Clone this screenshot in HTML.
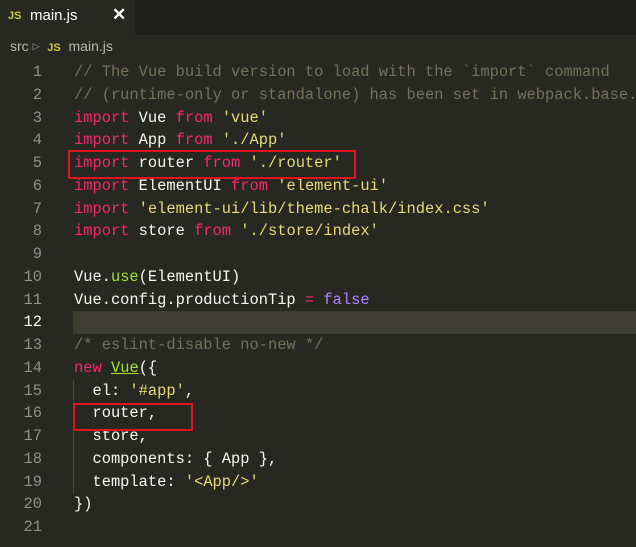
<!DOCTYPE html>
<html><head><meta charset="utf-8"><style>
body{margin:0;width:636px;height:547px;background:#272822;overflow:hidden;position:relative;font-family:"Liberation Mono",monospace;}
.tabbar{position:absolute;left:0;top:0;width:636px;height:35px;background:#1e1f1c;}
.tab{position:absolute;left:0;top:0;width:135px;height:35px;background:#272822;font-family:"Liberation Sans",sans-serif;}
.js{color:#cbcb41;font-weight:bold;font-size:11px;font-family:"Liberation Sans",sans-serif;}
.crumb{position:absolute;top:38px;left:10px;font-family:"Liberation Sans",sans-serif;font-size:14px;color:#b8b8b0;}
.ln{position:absolute;left:0;width:42px;text-align:right;color:#8f908a;font-size:15.4px;}
.code{position:absolute;left:74px;right:0;overflow:hidden;white-space:pre;color:#f8f8f2;font-size:15.4px;}
.k{color:#f92672}.s{color:#e6db74}.c{color:#75715e}.f{color:#a6e22e}.b{color:#ae81ff}
.box{position:absolute;border:2px solid #e0141e;box-sizing:border-box;}
</style></head><body>
<div class="tabbar"><div class="tab">
<span class="js" style="position:absolute;left:8px;top:10px">JS</span>
<span style="position:absolute;left:30px;top:7px;color:#fff;font-size:15px">main.js</span>
<span style="position:absolute;left:112px;top:5px;color:#fff;font-size:17px;font-weight:bold">✕</span>
</div></div>
<div class="crumb">src <span style="font-size:9px;color:#aaa;position:relative;top:-2px">▷</span>&nbsp; <span class="js" style="font-size:11px">JS</span>&nbsp; main.js</div>
<div style="position:absolute;left:73px;top:311px;width:563px;height:23px;background:#3e3d32"></div>
<div style="position:absolute;left:73px;top:380px;width:1px;height:114px;background:#464741"></div>
<div id="lines"></div>
<div class="box" style="left:68px;top:150px;width:288px;height:29px"></div>
<div class="box" style="left:73px;top:403px;width:120px;height:28px"></div>
<script>
var L=[
'<span class="c">// The Vue build version to load with the `import` command</span>',
'<span class="c">// (runtime-only or standalone) has been set in webpack.base.conf with an alias.</span>',
'<span class="k">import</span> Vue <span class="k">from</span> <span class="s">\'vue\'</span>',
'<span class="k">import</span> App <span class="k">from</span> <span class="s">\'./App\'</span>',
'<span class="k">import</span> router <span class="k">from</span> <span class="s">\'./router\'</span>',
'<span class="k">import</span> ElementUI <span class="k">from</span> <span class="s">\'element-ui\'</span>',
'<span class="k">import</span> <span class="s">\'element-ui/lib/theme-chalk/index.css\'</span>',
'<span class="k">import</span> store <span class="k">from</span> <span class="s">\'./store/index\'</span>',
'',
'Vue.<span class="f">use</span>(ElementUI)',
'Vue.config.productionTip <span class="k">=</span> <span class="b">false</span>',
'',
'<span class="c">/* eslint-disable no-new */</span>',
'<span class="k">new</span> <span class="f" style="text-decoration:underline">Vue</span>({',
'  el: <span class="s">\'#app\'</span>,',
'  router,',
'  store,',
'  components: { App },',
'  template: <span class="s">\'&lt;App/&gt;\'</span>',
'})',
''];
var h='';
for(var i=0;i<L.length;i++){var t=63+i*22.75;
h+='<div class="ln" style="top:'+t+'px;'+(i==11?'color:#f8f8f2':'')+'">'+(i+1)+'</div><div class="code" style="top:'+t+'px">'+L[i]+'</div>';}
document.getElementById('lines').innerHTML=h;
</script>
</body></html>
